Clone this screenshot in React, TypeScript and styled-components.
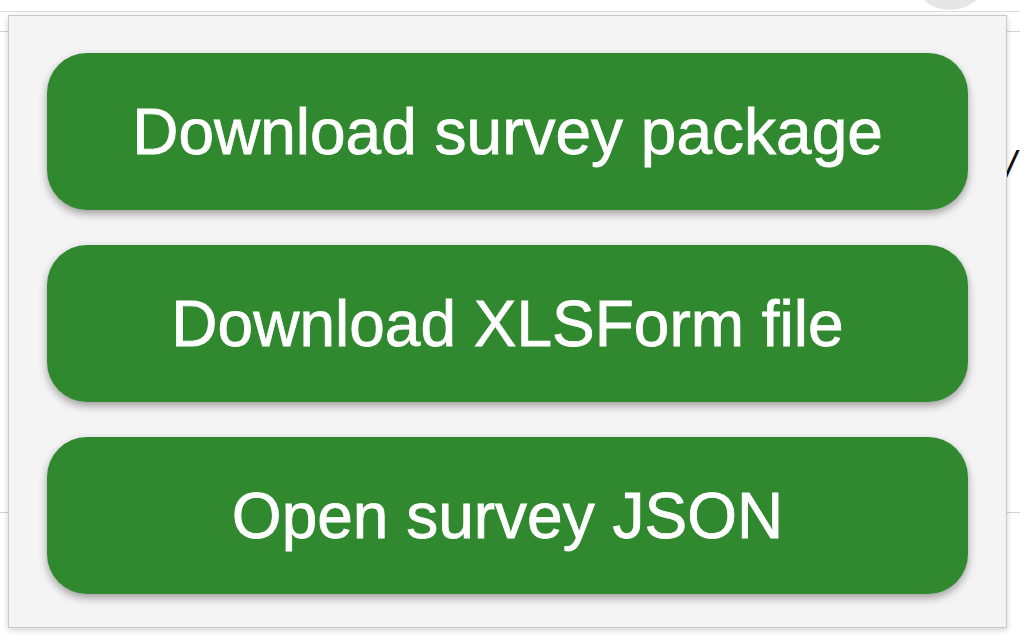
import React from "react";
import styled, { createGlobalStyle } from "styled-components";

const GlobalStyle = createGlobalStyle`
  html, body {
    margin: 0;
    padding: 0;
    background: #ffffff;
    font-family: "Liberation Sans", Arial, sans-serif;
  }
`;

const Page = styled.div`
  position: relative;
  width: 1020px;
  height: 638px;
  overflow: hidden;
  background: #ffffff;
`;

const Header = styled.div`
  height: 11px;
  border-bottom: 1px solid #dcdcdc;
  display: flex;
  justify-content: flex-end;
  padding-right: 30px;
`;

const Avatar = styled.div`
  width: 80px;
  height: 80px;
  margin-top: -70px;
  border-radius: 50%;
  background: #e6e6e6;
`;

const Toolbar = styled.div`
  height: 19px;
  border-bottom: 1px solid #d2d2d2;
`;

const Content = styled.div`
  height: 481px;
  border-bottom: 1px solid #d2d2d2;
  display: flex;
  justify-content: flex-end;
  padding-top: 114px;
  box-sizing: border-box;
`;

const Peek = styled.span`
  font-size: 40px;
  font-style: italic;
  color: #111;
  line-height: 1;
  margin-right: 4px;
`;

const Dropdown = styled.div`
  position: absolute;
  left: 8px;
  top: 15px;
  width: 999px;
  height: 613px;
  box-sizing: border-box;
  background: #f4f4f4;
  border: 1px solid #c9c9c9;
  box-shadow: 0 2px 6px rgba(0, 0, 0, 0.18);
  padding: 37px 38px 0 38px;
  display: flex;
  flex-direction: column;
  gap: 35px;
`;

const ActionButton = styled.button`
  height: 157px;
  width: 100%;
  border: none;
  border-radius: 40px;
  background: #31892f;
  color: #ffffff;
  font-family: "Liberation Sans", Arial, sans-serif;
  font-size: 64px;
  line-height: 1;
  -webkit-text-stroke: 0.8px #ffffff;
  text-shadow: 0 0 1px rgba(0, 0, 0, 0.25);
  box-shadow: 0 4px 8px rgba(0, 0, 0, 0.35);
  display: flex;
  align-items: center;
  justify-content: center;
  padding: 0;
  cursor: pointer;
`;

const actions = [
  "Download survey package",
  "Download XLSForm file",
  "Open survey JSON",
];

export default function App() {
  return (
    <>
      <GlobalStyle />
      <Page>
        <Header>
          <Avatar />
        </Header>
        <Toolbar />
        <Content>
          <Peek>/</Peek>
        </Content>
        <Dropdown>
          {actions.map((label) => (
            <ActionButton key={label}>{label}</ActionButton>
          ))}
        </Dropdown>
      </Page>
    </>
  );
}
